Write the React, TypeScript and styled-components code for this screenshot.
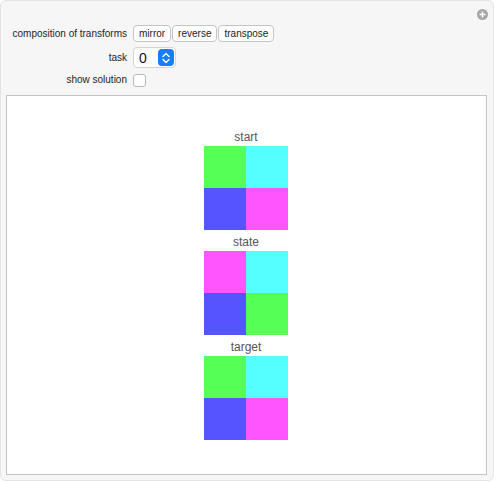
import styled, { createGlobalStyle } from "styled-components";

const GlobalStyle = createGlobalStyle`
    html, body {
        margin: 0;
        padding: 0;
        background: #fff;
    }
    body {
        font-family: "Liberation Sans", Arial, sans-serif;
    }
`

const GREEN = "#55ff55";
const CYAN = "#55ffff";
const BLUE = "#5555ff";
const MAGENTA = "#ff55ff";

const boards = [
    { title: "start", cells: [GREEN, CYAN, BLUE, MAGENTA] },
    { title: "state", cells: [MAGENTA, CYAN, BLUE, GREEN] },
    { title: "target", cells: [GREEN, CYAN, BLUE, MAGENTA] },
];

const transforms = ["mirror", "reverse", "transpose"];

export default function App() {
    return (
        <>
            <GlobalStyle />
            <Panel>
                <AddButton>
                    <svg width="11" height="11" viewBox="0 0 11 11">
                        <circle cx="5.5" cy="5.5" r="5.5" fill="#a6a6a6" />
                        <path d="M5.5 2.6v5.8M2.6 5.5h5.8" stroke="#fff" strokeWidth="1.6" />
                    </svg>
                </AddButton>

                <Controls>
                    <Label>composition of transforms</Label>
                    <ButtonGroup>
                        {transforms.map((t) => (
                            <ActionButton key={t}>{t}</ActionButton>
                        ))}
                    </ButtonGroup>

                    <Label>task</Label>
                    <Select>
                        <SelectValue>0</SelectValue>
                        <Stepper>
                            <svg width="10" height="14" viewBox="0 0 10 14">
                                <path d="M2 5.5L5 2.5L8 5.5M2 8.5L5 11.5L8 8.5" fill="none" stroke="#fff" strokeWidth="1.4" strokeLinecap="round" strokeLinejoin="round" />
                            </svg>
                        </Stepper>
                    </Select>

                    <Label>show solution</Label>
                    <Checkbox />
                </Controls>

                <Output>
                    {boards.map((b) => (
                        <Board key={b.title}>
                            <BoardTitle>{b.title}</BoardTitle>
                            <Grid>
                                {b.cells.map((c, i) => (
                                    <Cell key={i} color={c} />
                                ))}
                            </Grid>
                        </Board>
                    ))}
                </Output>
            </Panel>
        </>
    )
}

const Panel = styled.div`
    position: relative;
    box-sizing: border-box;
    width: 494px;
    height: 481px;
    background: #f6f6f6;
    border: 1px solid #e4e4e4;
    border-radius: 6px;
    padding: 24px 6px 0 5px;
`

const AddButton = styled.div`
    position: absolute;
    top: 8px;
    right: 5px;
    width: 11px;
    height: 11px;
    line-height: 0;
`

const Controls = styled.div`
    display: grid;
    grid-template-columns: 117px auto;
    grid-template-rows: 17px 21px 13px;
    row-gap: 5px;
    column-gap: 6px;
    align-items: center;
    padding-left: 4px;
`

const Label = styled.div`
    font-size: 10px;
    color: #1e1e1e;
    text-align: right;
    white-space: nowrap;
`

const ButtonGroup = styled.div`
    display: flex;
    gap: 1px;
`

const ActionButton = styled.div`
    box-sizing: border-box;
    height: 17px;
    padding: 0 5px;
    background: #fff;
    border: 1px solid #c4c4c4;
    border-radius: 4px;
    font-size: 10px;
    line-height: 15px;
    color: #222;
`

const Select = styled.div`
    box-sizing: border-box;
    width: 43px;
    height: 21px;
    display: flex;
    align-items: center;
    justify-content: space-between;
    padding: 0 1px 0 5px;
    background: #fff;
    border: 1px solid #d4d4d4;
    border-radius: 4px;
`

const SelectValue = styled.span`
    font-size: 14px;
    color: #111;
`

const Stepper = styled.div`
    width: 16px;
    height: 17px;
    border-radius: 4px;
    background: #1b7df6;
    display: flex;
    align-items: center;
    justify-content: center;
`

const Checkbox = styled.div`
    box-sizing: border-box;
    width: 13px;
    height: 13px;
    margin-top: 1px;
    background: #fff;
    border: 1px solid #b8b8b8;
    border-radius: 3px;
`

const Output = styled.div`
    box-sizing: border-box;
    margin-top: 9px;
    width: 481px;
    height: 380px;
    background: #fff;
    border: 1px solid #c4c4c4;
    display: flex;
    flex-direction: column;
    align-items: center;
    padding-top: 29px;
`

const Board = styled.div`
    display: flex;
    flex-direction: column;
    align-items: center;
    margin-right: 1px;
`

const BoardTitle = styled.div`
    height: 21px;
    box-sizing: border-box;
    padding-top: 5px;
    font-size: 12px;
    line-height: 14px;
    color: #555;
`

const Grid = styled.div`
    display: grid;
    grid-template-columns: 42px 42px;
    grid-template-rows: 42px 42px;
`

const Cell = styled.div<{ color: string }>`
    background: ${(p) => p.color};
`
